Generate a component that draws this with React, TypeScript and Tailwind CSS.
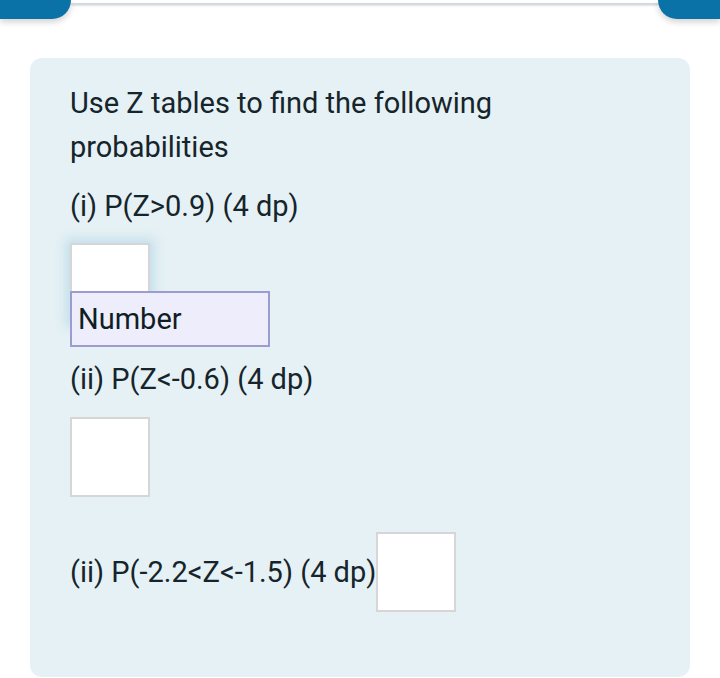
import React from "react";

const AnswerBox = ({ focused = false }: { focused?: boolean }) => (
  <div
    className={
      "w-20 h-20 shrink-0 bg-white border-2 border-[#d6d6d6] " +
      (focused ? "shadow-[0_0_10px_4px_rgba(150,200,225,0.45)]" : "")
    }
  />
);

const App = () => {
  return (
    <div className="w-[720px] h-[678px] bg-white overflow-hidden font-['Roboto',sans-serif] text-[#16242b]">
      {/* Top bar */}
      <div className="flex items-start h-[58px]">
        <div className="w-[71px] h-[19px] bg-[#0a72a6] rounded-br-[22px] shadow-[0_3px_6px_rgba(0,0,0,0.18)]" />
        <div className="flex-1 mt-[3px] h-[2px] bg-[#d3d9dc] shadow-[0_1px_2px_rgba(0,0,0,0.12)]" />
        <div className="w-[62px] h-[19px] bg-[#0a72a6] rounded-bl-[22px] shadow-[0_3px_6px_rgba(0,0,0,0.18)]" />
      </div>

      {/* Question card */}
      <div className="mx-[30px] h-[619px] bg-[#e5f1f4] rounded-[12px] pt-[23px] pl-[40px] pr-[40px] text-[29px] leading-[44px]">
        <p className="mb-[15px]">
          Use Z tables to find the following
          <br />
          probabilities
        </p>

        <p>(i) P(Z&gt;0.9) (4 dp)</p>
        <div className="relative mt-[15px]">
          <AnswerBox focused />
          <div className="absolute left-0 top-[48px] w-[200px] h-[56px] bg-[#ededfb] border-2 border-[#9c9cd0] flex items-center pl-[6px] text-[#0f1e25]">
            Number
          </div>
        </div>

        <p className="mt-[34px]">(ii) P(Z&lt;-0.6) (4 dp)</p>
        <div className="mt-[16px]">
          <AnswerBox />
        </div>

        <div className="mt-[35px] flex items-center">
          <span>(ii) P(-2.2&lt;Z&lt;-1.5) (4 dp)</span>
          <AnswerBox />
        </div>
      </div>
    </div>
  );
};

export default App;
